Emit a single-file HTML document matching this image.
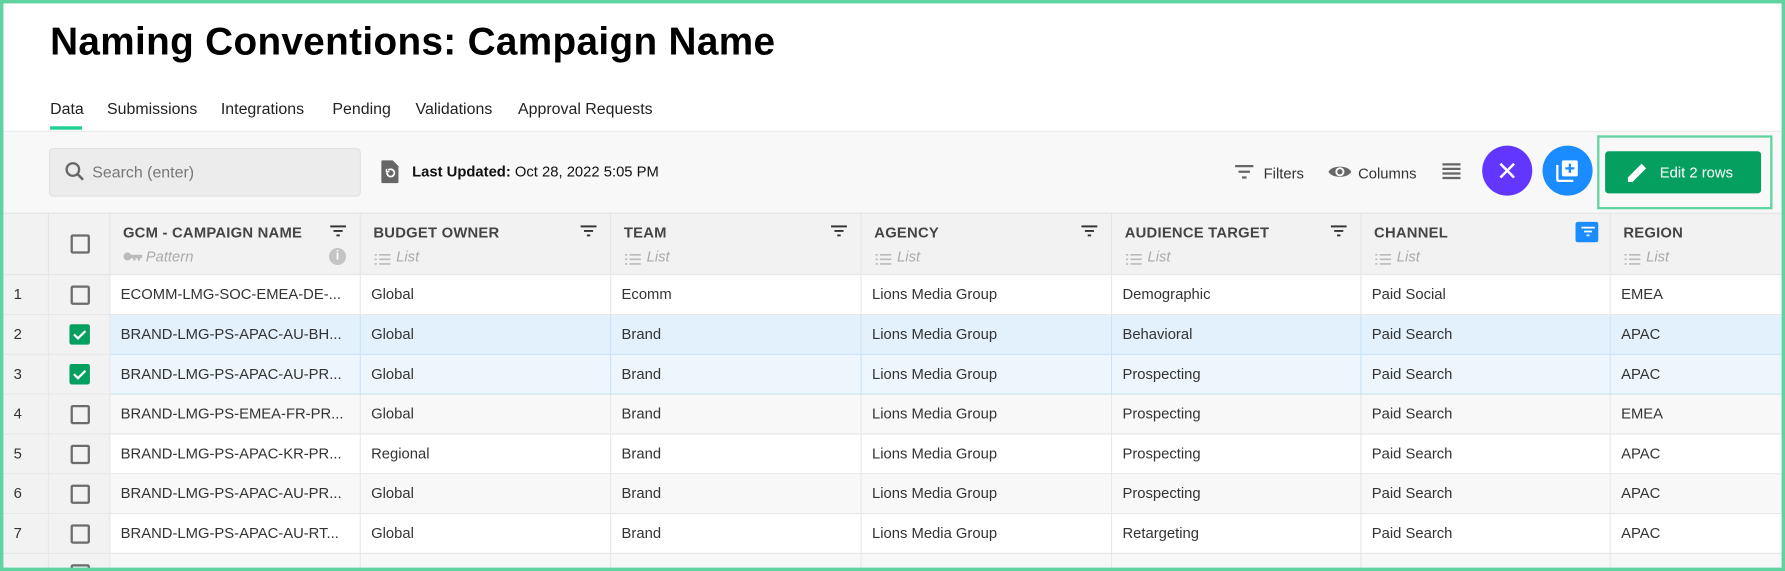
<!DOCTYPE html>
<html><head><meta charset="utf-8"><style>
*{box-sizing:border-box;margin:0;padding:0}
html,body{width:1785px;height:571px;overflow:hidden;background:#fff}
#w{position:absolute;left:0;top:0;width:1568px;height:502px;transform:scale(1.13839,1.1375);transform-origin:0 0;font-family:"Liberation Sans",sans-serif;color:#222;overflow:hidden}
.a{position:absolute}
.frame{position:absolute;left:0;top:0;width:1568px;height:502px;border:3px solid #5fd3a0;z-index:20;pointer-events:none}
h1{position:absolute;left:44px;top:18px;font-size:34px;font-weight:bold;color:#000;letter-spacing:0.3px}
.tab{position:absolute;top:87px;font-size:14px;color:#222}
.bar{position:absolute;left:3px;top:115px;width:1562px;height:72px;background:#f8f8f8;border-top:1px solid #ececec}
.search{position:absolute;left:43px;top:130px;width:274px;height:43px;background:#ececec;border:1px solid #e2e2e2;border-radius:4px}
.hdr{position:absolute;top:187px;height:55px;background:#f2f2f2;border-right:1px solid #e4e4e4;border-bottom:1px solid #e4e4e4;border-top:1px solid #e4e4e4}
.hdr b{position:absolute;left:11px;top:9px;font-size:13px;color:#444;letter-spacing:.2px}
.hdr i{position:absolute;left:11px;top:30px;font-size:13px;color:#aaa}
.hdr svg.f{position:absolute;right:12px;top:10px}
.cell{position:absolute;height:35px;border-right:1px solid #e6e6e6;border-bottom:1px solid #e6e6e6;font-size:13px;color:#333;line-height:34px;padding-left:9px;white-space:nowrap;overflow:hidden}
.cb{position:absolute;width:17px;height:17px;border:2px solid #6b6b6b;border-radius:2px}
.ck{position:absolute;width:18px;height:18px;background:#05a060;border-radius:2px}
</style></head><body><div id="w">
<div class="frame"></div>
<h1>Naming Conventions: Campaign Name</h1>
<div class="tab" style="left:44px">Data</div>
<div class="a" style="left:44px;top:111px;width:28px;height:3px;background:#1ecf8f"></div>
<div class="tab" style="left:94px">Submissions</div>
<div class="tab" style="left:194px">Integrations</div>
<div class="tab" style="left:292px">Pending</div>
<div class="tab" style="left:365px">Validations</div>
<div class="tab" style="left:455px">Approval Requests</div>

<div class="bar"></div>
<div class="search"></div>
<svg class="a" style="left:56px;top:141px" width="20" height="20" viewBox="0 0 20 20"><circle cx="8" cy="8" r="5.5" fill="none" stroke="#666" stroke-width="2"/><path d="M12 12l5 5" stroke="#666" stroke-width="2.2"/></svg>
<div class="a" style="left:81px;top:143px;font-size:14px;color:#777">Search (enter)</div>
<svg class="a" style="left:334px;top:140px" width="18" height="22" viewBox="0 0 18 22"><path d="M2 1h9l5 5v14a1 1 0 0 1-1 1H2a1 1 0 0 1-1-1V2a1 1 0 0 1 1-1z" fill="#666"/><path d="M6 12a3.2 3.2 0 1 0 1-2.3" fill="none" stroke="#fff" stroke-width="1.5"/><path d="M5.5 8.5v2.5h2.5" fill="none" stroke="#fff" stroke-width="1.3"/></svg>
<div class="a" style="left:362px;top:143px;font-size:13px;color:#111"><b>Last Updated:</b> Oct 28, 2022 5:05 PM</div>

<svg class="a" style="left:1084px;top:144px" width="18" height="14" viewBox="0 0 18 14"><path d="M1 2h16M4 7h10M7 12h4" stroke="#666" stroke-width="2"/></svg>
<div class="a" style="left:1110px;top:145px;font-size:13px;color:#333">Filters</div>
<svg class="a" style="left:1166px;top:143px" width="22" height="16" viewBox="0 0 22 16"><path d="M1 8C4 2 18 2 21 8C18 14 4 14 1 8z" fill="#666"/><circle cx="11" cy="8" r="4" fill="#f8f8f8"/><circle cx="11" cy="8" r="2.3" fill="#666"/></svg>
<div class="a" style="left:1193px;top:145px;font-size:13px;color:#333">Columns</div>
<svg class="a" style="left:1267px;top:143px" width="16" height="15" viewBox="0 0 16 15"><path d="M0 1.5h16M0 5.5h16M0 9.5h16M0 13.5h16" stroke="#666" stroke-width="2"/></svg>
<div class="a" style="left:1302px;top:128px;width:44px;height:44px;border-radius:50%;background:#6236ff"></div>
<svg class="a" style="left:1315px;top:141px" width="18" height="18" viewBox="0 0 18 18"><path d="M3 3l12 12M15 3L3 15" stroke="#fff" stroke-width="2.2"/></svg>
<div class="a" style="left:1355px;top:128px;width:44px;height:44px;border-radius:50%;background:#1a8cff"></div>
<svg class="a" style="left:1366px;top:139px" width="22" height="22" viewBox="0 0 22 22"><path d="M2 6v13a1 1 0 0 0 1 1h13" fill="none" stroke="#fff" stroke-width="2"/><rect x="6" y="2" width="14" height="14" rx="1.5" fill="#fff"/><path d="M13 5v8M9 9h8" stroke="#1a8cff" stroke-width="2"/></svg>
<div class="a" style="left:1403px;top:119px;width:154px;height:65px;border:2px solid #5fd3a0"></div>
<div class="a" style="left:1410px;top:133px;width:137px;height:37px;border-radius:3px;background:#05a060"></div>
<svg class="a" style="left:1429px;top:142px" width="19" height="19" viewBox="0 0 19 19"><path d="M1 18v-4L13 2l4 4L5 18z" fill="#fff"/></svg>
<div class="a" style="left:1458px;top:144px;font-size:13px;color:#fff">Edit 2 rows</div>

<div class="hdr" style="left:3px;width:40px"></div>
<div class="hdr" style="left:43px;width:54px"><div class="cb" style="left:19px;top:18px"></div></div>
<div class="hdr" style="left:97px;width:220px"><b>GCM - CAMPAIGN NAME</b><i style="padding-left:20px">Pattern</i>
<svg class="a" style="left:11px;top:33px" width="17" height="9" viewBox="0 0 17 9"><circle cx="4" cy="4.5" r="3.5" fill="#bbb"/><path d="M7 3h10v3h-2v2h-2V6h-2v2H9V6H7z" fill="#bbb"/></svg>
<svg class="f" width="14" height="10" viewBox="0 0 14 10"><path d="M0 1h14M3 5h8M5.5 9h3" stroke="#333" stroke-width="1.7"/></svg>
<div class="a" style="right:12px;top:30px;width:15px;height:15px;border-radius:50%;background:#c4c4c4;color:#fff;font-size:11px;font-weight:bold;text-align:center;line-height:15px">i</div></div>
<div class="hdr" style="left:317px;width:220px"><b>BUDGET OWNER</b><i style="padding-left:20px">List</i></div>
<div class="hdr" style="left:537px;width:220px"><b>TEAM</b><i style="padding-left:20px">List</i></div>
<div class="hdr" style="left:757px;width:220px"><b>AGENCY</b><i style="padding-left:20px">List</i></div>
<div class="hdr" style="left:977px;width:219px"><b>AUDIENCE TARGET</b><i style="padding-left:20px">List</i></div>
<div class="hdr" style="left:1196px;width:219px"><b>CHANNEL</b><i style="padding-left:20px">List</i>
<div class="a" style="right:10px;top:7px;width:20px;height:18px;background:#1a8cff;border-radius:2px"></div></div>
<div class="hdr" style="left:1415px;width:153px"><b>REGION</b><i style="padding-left:20px">List</i></div>
<div id="rows"></div>
</div>
<script>
var filt='<svg class="f" width="14" height="10" viewBox="0 0 14 10"><path d="M0 1h14M3 5h8M5.5 9h3" stroke="#333" stroke-width="1.7"/></svg>';
var fw='<svg class="f" style="right:13px;top:11px" width="12" height="9" viewBox="0 0 14 10"><path d="M0 1h14M3 5h8M5.5 9h3" stroke="#fff" stroke-width="1.8"/></svg>';
var hd=document.querySelectorAll('.hdr');
for(var i=3;i<hd.length;i++){
 if(i<=6) hd[i].insertAdjacentHTML('beforeend',filt);
 if(i==7) hd[i].insertAdjacentHTML('beforeend',fw);
 hd[i].insertAdjacentHTML('beforeend','<svg class="a" style="left:12px;top:35px" width="14" height="10" viewBox="0 0 14 10"><path d="M0 1h2M0 5h2M0 9h2M4 1h10M4 5h10M4 9h10" stroke="#bbb" stroke-width="1.4"/></svg>');
}
var data=[
["ECOMM-LMG-SOC-EMEA-DE-...","Global","Ecomm","Demographic","Paid Social","EMEA"],
["BRAND-LMG-PS-APAC-AU-BH...","Global","Brand","Behavioral","Paid Search","APAC"],
["BRAND-LMG-PS-APAC-AU-PR...","Global","Brand","Prospecting","Paid Search","APAC"],
["BRAND-LMG-PS-EMEA-FR-PR...","Global","Brand","Prospecting","Paid Search","EMEA"],
["BRAND-LMG-PS-APAC-KR-PR...","Regional","Brand","Prospecting","Paid Search","APAC"],
["BRAND-LMG-PS-APAC-AU-PR...","Global","Brand","Prospecting","Paid Search","APAC"],
["BRAND-LMG-PS-APAC-AU-RT...","Global","Brand","Retargeting","Paid Search","APAC"],
["","","","","",""]];
var cols=[[97,220],[317,220],[537,220],[757,220],[977,219],[1196,219],[1415,153]];
var h='';
for(var r=0;r<8;r++){
 var y=242+r*35;
 var bg=r==1?'#e3f1fd':r==2?'#eef6fd':(r%2==0?'#fff':'#f8f8f8');
 var bc=(r==1||r==2)?'#c8e1f7':'#e6e6e6';
 h+='<div class="cell" style="left:3px;top:'+y+'px;width:40px;background:#f2f2f2">'+(r<7?r+1:'')+'</div>';
 h+='<div class="cell" style="left:43px;top:'+y+'px;width:54px;background:#f2f2f2">'+(r==1||r==2?'<div class="ck" style="left:18px;top:8px"><svg width="18" height="18" viewBox="0 0 18 18" style="position:absolute;left:0;top:0"><path d="M4 9l3.5 3.5L14 6" fill="none" stroke="#fff" stroke-width="2"/></svg></div>':'<div class="cb" style="left:19px;top:9px"></div>')+'</div>';
 var vals=[data[r][0],data[r][1],data[r][2],"Lions Media Group",data[r][3],data[r][4],data[r][5]];
 if(r==7)vals[3]='';
 for(var c=0;c<7;c++)h+='<div class="cell" style="left:'+cols[c][0]+'px;top:'+y+'px;width:'+cols[c][1]+'px;background:'+bg+';border-color:'+bc+'">'+vals[c]+'</div>';
}
document.getElementById('rows').innerHTML=h;
</script>
</body></html>
